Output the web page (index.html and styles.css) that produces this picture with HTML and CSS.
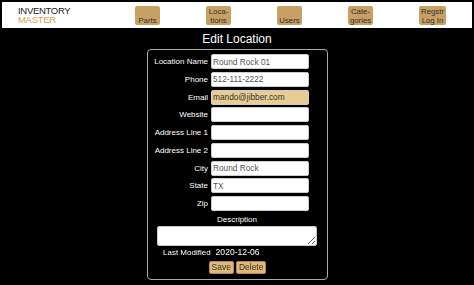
FILE: index.html
```html
<!DOCTYPE html>
<html>
<head>
<meta charset="utf-8">
<link rel="stylesheet" href="styles.css">
</head>
<body>
<header class="topbar">
  <div class="logo">
    <div class="logo-top">INVENTORY</div>
    <div class="logo-bottom">MASTER</div>
  </div>
  <nav class="nav">
    <a class="navbtn">Parts</a>
    <a class="navbtn">Loca-<br>tions</a>
    <a class="navbtn">Users</a>
    <a class="navbtn">Cate-<br>gories</a>
    <a class="navbtn">Regstr<br>Log In</a>
  </nav>
</header>
<main class="main">
  <h1 class="title">Edit Location</h1>
  <form class="card">
    <div class="row"><label>Location Name</label><input class="field" value="Round Rock 01"></div>
    <div class="row"><label>Phone</label><input class="field" value="512-111-2222"></div>
    <div class="row"><label>Email</label><input class="field filled" value="mando@jibber.com"></div>
    <div class="row"><label>Website</label><input class="field" value=""></div>
    <div class="row"><label>Address Line 1</label><input class="field" value=""></div>
    <div class="row"><label>Address Line 2</label><input class="field" value=""></div>
    <div class="row"><label>City</label><input class="field" value="Round Rock"></div>
    <div class="row"><label>State</label><input class="field" value="TX"></div>
    <div class="row"><label>Zip</label><input class="field" value=""></div>
    <div class="desc-label">Description</div>
    <textarea class="desc"></textarea>
    <div class="modified"><span class="mod-label">Last Modified</span><span class="mod-value">2020-12-06</span></div>
    <div class="actions"><button type="button" class="btn">Save</button><button type="button" class="btn">Delete</button></div>
  </form>
</main>
</body>
</html>
```
FILE: styles.css
```css
html, body {
  margin: 0;
  padding: 0;
  background: #000;
  font-family: "Liberation Sans", Arial, sans-serif;
  -webkit-font-smoothing: antialiased;
}
.topbar {
  margin: 2px 2px 0 2px;
  height: 26px;
  background: #fff;
  display: flex;
  align-items: center;
}
.logo {
  margin-left: 16px;
  width: 60px;
  font-size: 9.5px;
  line-height: 9.5px;
  letter-spacing: -0.3px;
}
.logo-top { color: #222; }
.logo-bottom { color: #d4a256; }
.nav {
  display: flex;
  margin-left: 57px;
  align-self: stretch;
  align-items: flex-start;
  padding-top: 4px;
}
.navbtn {
  width: 25px;
  height: 19px;
  background: #c9a063;
  border-radius: 2px;
  color: #333;
  font-size: 7.8px;
  line-height: 9px;
  text-align: center;
  display: flex;
  flex-direction: column;
  justify-content: flex-end;
  align-items: center;
  padding-bottom: 0.5px;
  box-sizing: border-box;
  margin-right: 46px;
  white-space: nowrap;
}
.navbtn:last-child { margin-right: 0; width: 27px; }
.main {
  display: flex;
  flex-direction: column;
  align-items: center;
}
.title {
  margin: 4px 0 3px 0;
  color: #fff;
  font-weight: normal;
  font-size: 12px;
  line-height: 14px;
}
.card {
  width: 181px;
  box-sizing: border-box;
  border: 1px solid #aaa;
  border-radius: 4px;
  padding: 4px 18px 5px 0;
  display: flex;
  flex-direction: column;
  gap: 2.75px;
  margin-left: 1px;
}
.row {
  display: flex;
  align-items: center;
}
.row label {
  width: 60px;
  text-align: right;
  color: #fff;
  font-size: 8px;
  margin-right: 3px;
  white-space: nowrap;
}
.field {
  width: 98px;
  height: 15px;
  box-sizing: border-box;
  border: 1px solid #ccc;
  border-radius: 2px;
  padding: 0 1px;
  font-family: "Liberation Sans", Arial, sans-serif;
  font-size: 8.3px;
  color: #555;
  background: #fff;
  outline: none;
}
.field.filled {
  background: #e8cc92;
  color: #333;
}
.desc-label {
  color: #fff;
  font-size: 8px;
  text-align: center;
  margin-left: 17px;
  margin-top: 1px;
  line-height: 9px;
}
.desc {
  width: 160px;
  height: 20px;
  margin: -1px 0 0 9px;
  box-sizing: border-box;
  border: 1px solid #ccc;
  border-radius: 2px;
  resize: vertical;
  background: #fff;
}
.modified {
  display: flex;
  align-items: baseline;
  margin-left: 15px;
  margin-top: -1px;
  line-height: 10px;
}
.mod-label {
  color: #fff;
  font-size: 8px;
  margin-right: 5px;
}
.mod-value {
  color: #fff;
  font-size: 8.6px;
}
.actions {
  display: flex;
  justify-content: center;
  gap: 2px;
  margin-left: 18px;
  margin-top: 0;
}
.btn {
  height: 12.5px;
  padding: 0 2px;
  border: 1px solid #b08850;
  border-radius: 2px;
  background: #e0b877;
  color: #333;
  font-family: "Liberation Sans", Arial, sans-serif;
  font-size: 8.5px;
  line-height: 10px;
}
```
